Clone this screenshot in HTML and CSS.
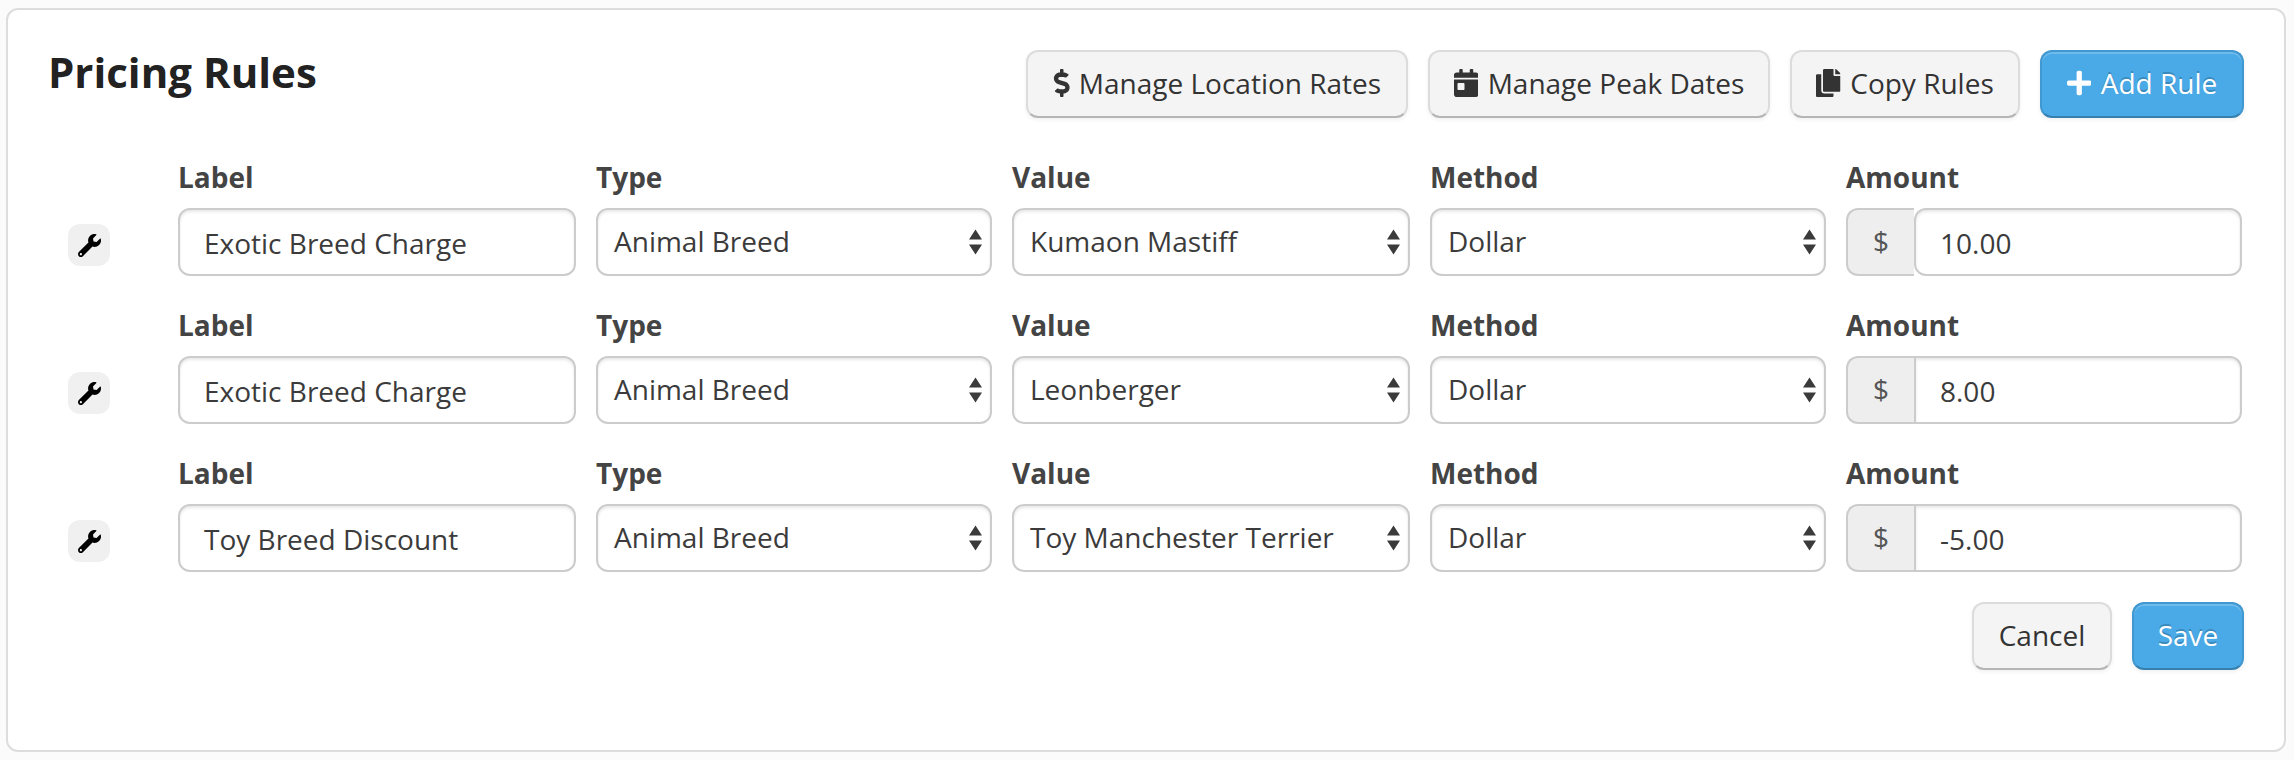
FILE: index.html
```
<!DOCTYPE html>
<html lang="en">
<head>
    <meta charset="UTF-8">
    <meta name="viewport" content="width=device-width, initial-scale=1.0">
    <link rel="stylesheet" href="styles.css">
    <title>Pricing Rules</title>
</head>
<body>
    <!-- icon shapes, reused below -->
    <svg class="sprite" width="0" height="0">
        <symbol id="dollar" viewBox="0 0 288 512"><path d="M209.2 233.4l-108-31.6C88.7 198.2 80 186.5 80 173.5c0-16.3 13.2-29.5 29.5-29.5h66.3c12.2 0 24.2 3.7 34.2 10.5 6.1 4.1 14.3 3.1 19.5-2l34.8-34c7.1-6.9 6.1-18.4-1.8-24.5C238 74.8 207.4 64.1 176 64V16c0-8.8-7.2-16-16-16h-32c-8.8 0-16 7.2-16 16v48h-2.5C45.8 64-5.4 118.7.5 183.6c4.2 46.1 39.4 83.6 83.8 96.6l102.5 30c12.5 3.7 21.2 15.3 21.2 28.3 0 16.3-13.2 29.5-29.5 29.5h-66.3C100 368 88 364.3 78 357.5c-6.1-4.1-14.3-3.1-19.5 2l-34.8 34c-7.1 6.9-6.1 18.4 1.8 24.5 24.5 19.2 55.1 29.9 86.5 30v48c0 8.8 7.2 16 16 16h32c8.8 0 16-7.2 16-16v-48.2c46.6-.9 90.3-28.6 105.7-72.7 21.5-61.6-14.6-124.8-72.5-141.7z"/></symbol>
        <symbol id="calendar" viewBox="0 0 448 512"><path d="M0 464c0 26.5 21.5 48 48 48h352c26.5 0 48-21.5 48-48V192H0v272zm64-192c0-8.8 7.2-16 16-16h96c8.8 0 16 7.2 16 16v96c0 8.8-7.2 16-16 16H80c-8.8 0-16-7.2-16-16v-96zM400 64h-48V16c0-8.8-7.2-16-16-16h-32c-8.8 0-16 7.2-16 16v48H160V16c0-8.8-7.2-16-16-16h-32c-8.8 0-16 7.2-16 16v48H48C21.5 64 0 85.5 0 112v48h448v-48c0-26.5-21.5-48-48-48z"/></symbol>
        <symbol id="copy" viewBox="0 0 448 512"><path d="M320 448v40c0 13.255-10.745 24-24 24H24c-13.255 0-24-10.745-24-24V120c0-13.255 10.745-24 24-24h72v296c0 30.879 25.121 56 56 56h168zm0-344V0H152c-13.255 0-24 10.745-24 24v368c0 13.255 10.745 24 24 24h272c13.255 0 24-10.745 24-24V128H344c-13.2 0-24-10.8-24-24zm120.971-31.029L375.029 7.029A24 24 0 0 0 358.059 0H352v96h96v-6.059a24 24 0 0 0-7.029-16.97z"/></symbol>
        <symbol id="plus" viewBox="0 0 448 512"><path d="M416 208H272V64c0-17.67-14.33-32-32-32h-32c-17.67 0-32 14.33-32 32v144H32c-17.67 0-32 14.33-32 32v32c0 17.67 14.33 32 32 32h144v144c0 17.67 14.33 32 32 32h32c17.67 0 32-14.33 32-32V304h144c17.67 0 32-14.33 32-32v-32c0-17.67-14.33-32-32-32z"/></symbol>
        <symbol id="wrench" viewBox="0 0 512 512"><path d="M507.73 109.1c-2.24-9.03-13.54-12.09-20.12-5.51l-74.36 74.36-67.88-11.31-11.31-67.88 74.36-74.36c6.62-6.62 3.43-17.9-5.66-20.16-47.38-11.74-99.55.91-136.58 37.93-39.64 39.64-50.55 97.1-34.05 147.2L18.74 402.76c-24.99 24.99-24.99 65.51 0 90.5 24.99 24.99 65.51 24.99 90.5 0l213.21-213.21c50.12 16.71 107.47 5.68 147.37-34.22 37.07-37.07 49.7-89.32 37.91-136.73zM64 472c-13.25 0-24-10.75-24-24 0-13.26 10.75-24 24-24s24 10.74 24 24c0 13.25-10.75 24-24 24z"/></symbol>
        <symbol id="arrows" viewBox="0 0 13 26"><path d="M6.5 0.5L13 10.5H0zM0 15.5H13L6.5 25.5z"/></symbol>
    </svg>
    <main class="panel">
        <header class="panel-header">
            <h1>Pricing Rules</h1>
            <div class="actions">
                <button class="btn btn-rates"><svg class="icon icon-narrow"><use href="#dollar"/></svg>Manage Location Rates</button>
                <button class="btn btn-dates"><svg class="icon"><use href="#calendar"/></svg>Manage Peak Dates</button>
                <button class="btn btn-copy"><svg class="icon"><use href="#copy"/></svg>Copy Rules</button>
                <button class="btn btn-primary btn-add"><svg class="icon"><use href="#plus"/></svg>Add Rule</button>
            </div>
        </header>

        <section class="rule">
            <button class="tool"><svg><use href="#wrench"/></svg></button>
            <div class="field"><label>Label</label><div class="control input">Exotic Breed Charge</div></div>
            <div class="field"><label>Type</label><div class="control select">Animal Breed<svg><use href="#arrows"/></svg></div></div>
            <div class="field"><label>Value</label><div class="control select">Kumaon Mastiff<svg><use href="#arrows"/></svg></div></div>
            <div class="field"><label>Method</label><div class="control select">Dollar<svg><use href="#arrows"/></svg></div></div>
            <div class="field"><label>Amount</label>
                <div class="group"><span class="addon">$</span><div class="control input rounded">10.00</div></div>
            </div>
        </section>

        <section class="rule">
            <button class="tool"><svg><use href="#wrench"/></svg></button>
            <div class="field"><label>Label</label><div class="control input">Exotic Breed Charge</div></div>
            <div class="field"><label>Type</label><div class="control select">Animal Breed<svg><use href="#arrows"/></svg></div></div>
            <div class="field"><label>Value</label><div class="control select">Leonberger<svg><use href="#arrows"/></svg></div></div>
            <div class="field"><label>Method</label><div class="control select">Dollar<svg><use href="#arrows"/></svg></div></div>
            <div class="field"><label>Amount</label>
                <div class="group"><span class="addon">$</span><div class="control input">8.00</div></div>
            </div>
        </section>

        <section class="rule">
            <button class="tool"><svg><use href="#wrench"/></svg></button>
            <div class="field"><label>Label</label><div class="control input">Toy Breed Discount</div></div>
            <div class="field"><label>Type</label><div class="control select">Animal Breed<svg><use href="#arrows"/></svg></div></div>
            <div class="field"><label>Value</label><div class="control select">Toy Manchester Terrier<svg><use href="#arrows"/></svg></div></div>
            <div class="field"><label>Method</label><div class="control select">Dollar<svg><use href="#arrows"/></svg></div></div>
            <div class="field"><label>Amount</label>
                <div class="group"><span class="addon">$</span><div class="control input">-5.00</div></div>
            </div>
        </section>

        <footer class="actions panel-footer">
            <button class="btn btn-cancel">Cancel</button>
            <button class="btn btn-primary btn-save">Save</button>
        </footer>
    </main>
</body>
</html>
```

FILE: styles.css
```
* {
  margin: 0;
  padding: 0;
  box-sizing: border-box;
  font-family: "Open Sans", sans-serif;
}

body {
  height: 760px;
  padding: 8px 8px 8px 6px;
  background-color: #fbfbfb;
  font-size: 28px;
  color: #3b3b3b;
}

.sprite {
  display: block;
}

svg {
  fill: currentColor;
}

.panel {
  height: 744px;
  padding: 40px 40px 0;
  background-color: #fff;
  border: 2px solid #ddd;
  border-radius: 12px;
}

.panel-header {
  display: flex;
  justify-content: space-between;
  height: 98px;
}

.panel-footer {
  padding-top: 10px;
}

h1 {
  font-size: 42px;
  line-height: 43px;
  color: #222;
}

.actions {
  display: flex;
  justify-content: flex-end;
  align-items: flex-start;
  gap: 20px;
}

.btn {
  display: flex;
  align-items: center;
  justify-content: center;
  height: 68px;
  padding-bottom: 2px;
  font-size: 28px;
  white-space: nowrap;
  color: #333;
  background-color: #f4f4f4;
  border: 2px solid #dcdcdc;
  border-bottom-color: #b5b5b5;
  border-radius: 12px;
  box-shadow: 0 2px 4px rgba(0, 0, 0, 0.06);
}

.btn-primary {
  color: #fff;
  background-color: #4aaae7;
  border-color: #4198d0;
  border-bottom-color: #3680b0;
  box-shadow: inset 0 2px 0 rgba(255, 255, 255, 0.2), 0 2px 4px rgba(0, 0, 0, 0.06);
  text-shadow: 0 -2px 0 rgba(0, 0, 0, 0.2);
}

.btn-rates {
  width: 382px;
}

.btn-dates {
  width: 342px;
}

.btn-copy {
  width: 230px;
}

.btn-add {
  width: 204px;
}

.btn-cancel {
  width: 140px;
}

.btn-save {
  width: 112px;
}

.icon {
  width: 24.5px;
  height: 28px;
  margin-right: 9.5px;
}

.icon-narrow {
  width: 17.5px;
  margin-right: 8.5px;
}

.rule {
  display: grid;
  grid-template-columns: 110px 398px 396px 398px 396px 396px;
  column-gap: 20px;
  height: 148px;
}

.rule .tool {
  display: flex;
  align-items: center;
  justify-content: center;
  width: 42px;
  height: 42px;
  margin: 76px 0 0 20px;
  padding: 1px 0 0 1px;
  color: #000;
  background-color: #f0f0f0;
  border: none;
  border-radius: 12px;
}

.tool svg {
  width: 23px;
  height: 23px;
}

.field label {
  display: block;
  height: 60px;
  padding-top: 10px;
  line-height: 38px;
  font-weight: bold;
  color: #444;
}

.control {
  display: flex;
  align-items: center;
  height: 68px;
  border: 2px solid #ccc;
  border-radius: 12px;
  box-shadow: inset 0 2px 3px rgba(0, 0, 0, 0.09);
  background-color: #fff;
}

.input {
  padding: 2px 24px 0;
}

.select {
  justify-content: space-between;
  padding: 0 8px 2px 16px;
}

.select svg {
  width: 13px;
  height: 26px;
  margin-top: 2px;
}

.group {
  display: flex;
}

.addon {
  display: flex;
  align-items: center;
  justify-content: center;
  width: 68px;
  height: 68px;
  padding-bottom: 2px;
  color: #555;
  background-color: #eee;
  border: 2px solid #ccc;
  border-right: none;
  border-radius: 12px 0 0 12px;
}

.group .control {
  flex: 1;
  border-radius: 0 12px 12px 0;
}

.group .rounded {
  border-radius: 12px;
}
```
